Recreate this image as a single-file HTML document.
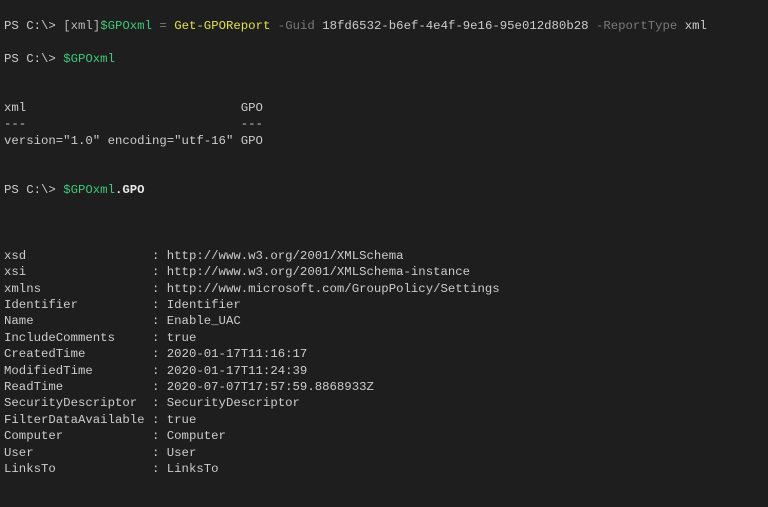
<!DOCTYPE html>
<html><head><meta charset="utf-8"><style>
html,body{margin:0;padding:0;background:#1e1e1e;width:768px;height:507px;overflow:hidden}
pre{margin:0;padding:18px 0 0 4px;font-family:"Liberation Mono",monospace;font-size:12.33px;line-height:16.4px;color:#cccccc;white-space:pre}
.g{color:#3fc77a}.y{color:#e1e14a}.d{color:#7a7a7a}.b{font-weight:bold;color:#e8e8e8}.k{color:#b8b8b8}
</style></head><body><pre>PS C:\&gt; <span class="k">[xml]</span><span class="g">$GPOxml</span> <span class="d">=</span> <span class="y">Get-GPOReport</span> <span class="d">-Guid</span> 18fd6532-b6ef-4e4f-9e16-95e012d80b28 <span class="d">-ReportType</span> xml

PS C:\&gt; <span class="g">$GPOxml</span>


xml                             GPO
---                             ---
version="1.0" encoding="utf-16" GPO


PS C:\&gt; <span class="g">$GPOxml</span><span class="b">.GPO</span>



xsd                 : http://www.w3.org/2001/XMLSchema
xsi                 : http://www.w3.org/2001/XMLSchema-instance
xmlns               : http://www.microsoft.com/GroupPolicy/Settings
Identifier          : Identifier
Name                : Enable_UAC
IncludeComments     : true
CreatedTime         : 2020-01-17T11:16:17
ModifiedTime        : 2020-01-17T11:24:39
ReadTime            : 2020-07-07T17:57:59.8868933Z
SecurityDescriptor  : SecurityDescriptor
FilterDataAvailable : true
Computer            : Computer
User                : User
LinksTo             : LinksTo
</pre></body></html>
